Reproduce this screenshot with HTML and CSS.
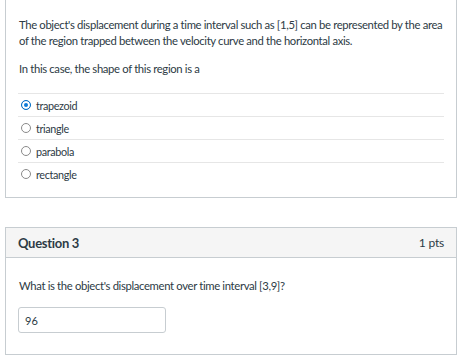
FILE: index.html
```html
<!DOCTYPE html>
<html>
  <head>
    <title>Quiz</title>
    <link rel="stylesheet" href="styles.css">
  </head>
  <body>
    <div class="question first">
      <div class="questionText">
        <p>The object's displacement during a time interval such as [1,5] can be represented by the area of the region trapped between the velocity curve and the horizontal axis.</p>
        <p>In this case, the shape of this region is a</p>
      </div>
      <ul class="answers">
        <li><span class="radio checked"></span>trapezoid</li>
        <li><span class="radio"></span>triangle</li>
        <li><span class="radio"></span>parabola</li>
        <li><span class="radio"></span>rectangle</li>
      </ul>
    </div>

    <div class="question">
      <div class="header">
        <span class="name">Question 3</span>
        <span class="points">1 pts</span>
      </div>
      <div class="questionText">
        <p>What is the object's displacement over time interval [3,9]?</p>
      </div>
      <div class="answerBox">
        <input type="text" class="numeric" value="96">
      </div>
    </div>
  </body>
</html>
```

FILE: styles.css
```css
* {
  box-sizing: border-box;
}

body {
  margin: 0;
  font-family: Lato, "Open Sans", sans-serif;
  font-size: 11.3px;
  letter-spacing: -0.35px;
  color: #2d3b45;
  background: #fff;
}

/* Question card */
.question {
  margin-left: 5px;
  width: 452px;
  border: 1px solid #c7cdd1;
  margin-top: 29px;
}

/* first card is cut off at the top of the screen */
.question.first {
  margin-top: 0;
  border-top: none;
  padding-bottom: 12px;
}

.questionText {
  padding: 17px 4px 0 13px;
}

.questionText p {
  margin: 0 0 12px 0;
  line-height: 16px;
}

/* Answer list */
.answers {
  list-style: none;
  margin: 16px 12px 0 12px;
  padding: 0;
}

.answers li {
  display: flex;
  align-items: center;
  height: 23px;
  border-top: 1px solid #e6e6e6;
  padding-left: 3px;
  font-size: 10.8px;
}

.radio {
  width: 10px;
  height: 10px;
  border: 1px solid #8a8a8a;
  border-radius: 50%;
  margin-right: 5px;
  flex-shrink: 0;
}

.radio.checked {
  border-color: #0770c4;
  background: #0b7ad8;
  box-shadow: inset 0 0 0 2px #fff;
}

/* Header of a question */
.header {
  display: flex;
  justify-content: space-between;
  align-items: center;
  height: 30px;
  padding: 0 12px;
  background: #f5f5f5;
  border-bottom: 1px solid #c7cdd1;
}

.header .name {
  font-weight: bold;
  font-size: 13px;
  letter-spacing: -0.3px;
}

.header .points {
  font-size: 12px;
  letter-spacing: -0.2px;
}

.question .header + .questionText {
  padding-top: 20px;
}

.answerBox {
  padding: 1px 12px 21px 12px;
}

.numeric {
  width: 148px;
  height: 26px;
  border: 1px solid #c7cdd1;
  border-radius: 3px;
  padding: 0 6px;
  font-family: Lato, sans-serif;
  font-size: 11px;
  color: #2d3b45;
}
```
